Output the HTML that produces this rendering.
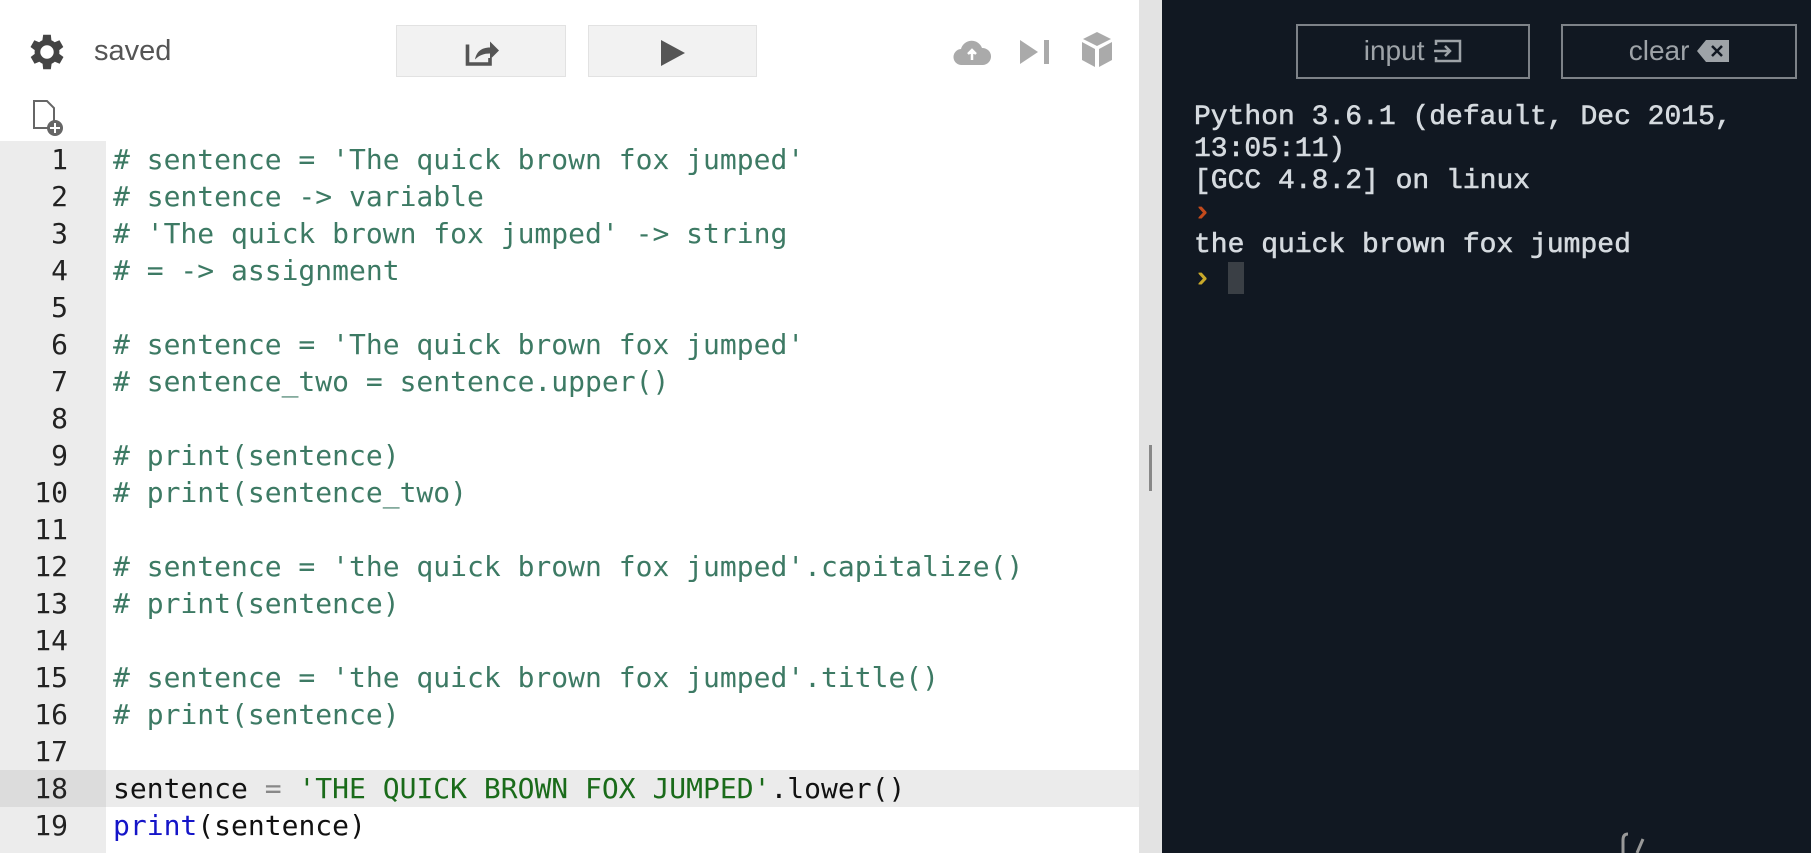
<!DOCTYPE html>
<html><head><meta charset="utf-8"><style>
*{margin:0;padding:0;box-sizing:border-box}
body{width:1811px;height:853px;overflow:hidden;background:#fff;position:relative;font-family:"Liberation Sans",sans-serif}
.ed{position:absolute;left:0;top:0;width:1139px;height:853px;background:#fff;overflow:hidden}
.gut{position:absolute;left:0;top:141px;width:106px;height:712px;background:#ececec}
.line{position:absolute;left:0;height:37px;width:1139px;font-family:"DejaVu Sans Mono",monospace;font-size:28px;line-height:37px;white-space:pre}
.ln{position:absolute;left:0;width:68px;text-align:right;color:#222}
.code{position:absolute;left:113px;color:#3d7a64}
.hl{background:#ebebeb}
.hl .lnbg{position:absolute;left:0;top:0;width:106px;height:37px;background:#dcdcdc}
.div{position:absolute;left:1139px;top:0;width:23px;height:853px;background:#e3e3e3}
.con{position:absolute;left:1162px;top:0;width:649px;height:853px;background:#111822;overflow:hidden}
.btn{position:absolute;top:24px;height:55px;border:2px solid #7d8288;color:#9ea3a8;font-size:28px;text-align:center;line-height:50px}
.ct{position:absolute;left:1194px;font-family:"Liberation Mono",monospace;font-size:28px;color:#d5dadf;white-space:pre;line-height:32px;-webkit-text-stroke:0.6px #d5dadf}
.tb{position:absolute;top:25px;height:52px;background:#f2f2f2;border:1px solid #e2e2e2}
</style></head><body>
<div class="ed">
<svg style="position:absolute;left:24px;top:29px" width="46" height="46" viewBox="0 0 24 24"><path fill="#444" d="M19.4 13a7.5 7.5 0 0 0 0-2l2.1-1.6-2-3.5-2.5 1a7 7 0 0 0-1.7-1L15 3h-4l-.4 2.9a7 7 0 0 0-1.7 1l-2.5-1-2 3.5L6.6 11a7.5 7.5 0 0 0 0 2l-2.1 1.6 2 3.5 2.5-1a7 7 0 0 0 1.7 1L11 21h4l.4-2.9a7 7 0 0 0 1.700-1l2.5 1 2-3.5zM13 15.5a3.5 3.5 0 1 1 0-7 3.5 3.5 0 0 1 0 7z" transform="translate(-1 0)"/></svg>
<div style="position:absolute;left:94px;top:35px;font-size:29px;color:#555">saved</div>
<div class="tb" style="left:396px;width:170px"><svg style="position:absolute;left:66px;top:11px" width="36" height="30" viewBox="0 0 24 20"><path fill="none" stroke="#555" stroke-width="2.4" d="M3 5v13h15v-4"/><path fill="#555" d="M8 15c1-5 4-8 10-8V3l6 6-6 6v-4c-4 0-7 1-10 4z"/></svg></div>
<div class="tb" style="left:588px;width:169px"><svg style="position:absolute;left:72px;top:14px" width="24" height="26" viewBox="0 0 12 13"><path fill="#555" d="M0 0l12 6.5L0 13z"/></svg></div>
<svg style="position:absolute;left:953px;top:38px" width="38" height="28" viewBox="0 0 38 28"><path fill="#aaa" d="M9 27a8 8 0 0 1-1-16 11 11 0 0 1 21-1 8 8 0 0 1 1 17z"/><path stroke="#fff" stroke-width="2.5" fill="#fff" d="M19 22v-9M15 16l4-4 4 4"/></svg>
<svg style="position:absolute;left:1020px;top:38px" width="32" height="28" viewBox="0 0 32 28"><path fill="#aaa" d="M0 2l18 12L0 26z"/><rect x="24" y="2" width="5" height="24" fill="#aaa"/></svg>
<svg style="position:absolute;left:1081px;top:32px" width="32" height="36" viewBox="0 0 32 36"><path fill="#aaa" d="M16 0l14 7-14 7-14-7zM1 10l13 7v18L1 28zM31 10l-13 7v18l13-7z"/></svg>
<svg style="position:absolute;left:32px;top:100px" width="34" height="38" viewBox="0 0 34 38"><path fill="#fff" stroke="#666" stroke-width="2" d="M2 1h13l7 7v20H2z"/><circle cx="23" cy="28" r="8" fill="#666"/><path stroke="#fff" stroke-width="2" d="M23 23v10M18 28h10"/></svg>
<div class="gut"></div>
<div id="code"></div>
</div>
<div class="div"><div style="position:absolute;left:10px;top:445px;width:3px;height:46px;background:#888"></div></div>
<div class="con">
<div class="btn" style="left:134px;width:234px">input <svg width="30" height="24" viewBox="0 0 30 24" style="vertical-align:-3px"><path fill="none" stroke="#9ea3a8" stroke-width="2.5" d="M4 6V2h24v20H4v-4M2 12h16M13 7l5 5-5 5"/></svg></div>
<div class="btn" style="left:399px;width:236px">clear <svg width="32" height="22" viewBox="0 0 32 22" style="vertical-align:-2px"><path fill="#9ea3a8" d="M9 0h23v22H9L0 11z"/><path stroke="#111822" stroke-width="2.5" d="M15 6l10 10M25 6L15 16"/></svg></div>
<svg style="position:absolute;left:453px;top:832px" width="40" height="21"><path stroke="#999" stroke-width="3" fill="none" d="M8 21V8q0-6 5-6M22 21l6-14"/></svg>
</div>
<div class="ct" style="top:102px">Python 3.6.1 (default, Dec 2015,
13:05:11)
[GCC 4.8.2] on linux
<span style="color:#c34a1c;-webkit-text-stroke:1px #c34a1c">›</span>
the quick brown fox jumped
<span style="color:#c9a92a;-webkit-text-stroke:1px #c9a92a">›</span> <span style="display:inline-block;width:16px;height:32px;background:#3a3f45;vertical-align:-8px"></span></div>
<script>
var L=["# sentence = 'The quick brown fox jumped'","# sentence -> variable","# 'The quick brown fox jumped' -> string","# = -> assignment","","# sentence = 'The quick brown fox jumped'","# sentence_two = sentence.upper()","","# print(sentence)","# print(sentence_two)","","# sentence = 'the quick brown fox jumped'.capitalize()","# print(sentence)","","# sentence = 'the quick brown fox jumped'.title()","# print(sentence)","",
"<span style='color:#111'>sentence </span><span style='color:#888'>=</span> <span style='color:#1a6b1a'>'THE QUICK BROWN FOX JUMPED'</span><span style='color:#111'>.lower()</span>",
"<span style='color:#1515c8'>print</span><span style='color:#111'>(sentence)</span>"];
var h="";for(var i=0;i<L.length;i++){var c=i==17?" hl":"";h+="<div class='line"+c+"' style='top:"+(141+i*37)+"px'>"+(i==17?"<div class='lnbg'></div>":"")+"<span class='ln'>"+(i+1)+"</span><span class='code'>"+L[i]+"</span></div>";}
document.getElementById("code").innerHTML=h;
</script>
</body></html>
